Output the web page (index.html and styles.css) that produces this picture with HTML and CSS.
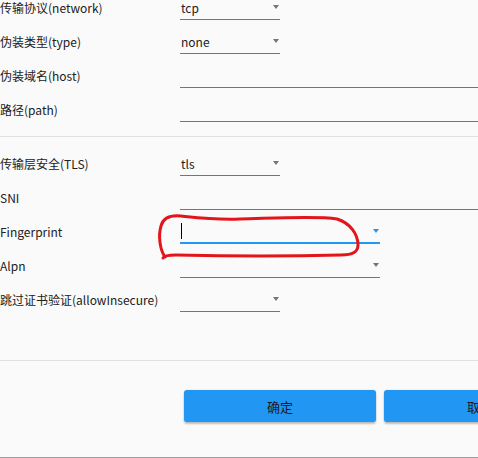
FILE: index.html
```html
<!DOCTYPE html>
<html lang="zh">
<head>
<meta charset="utf-8">
<link rel="stylesheet" href="styles.css">
</head>
<body>
<div class="page">
  <div class="section first">
    <div class="row"><div class="label">传输协议(network)</div><div class="field select short"><span class="value">tcp</span><span class="arrow"></span></div></div>
    <div class="row"><div class="label">伪装类型(type)</div><div class="field select short"><span class="value">none</span><span class="arrow"></span></div></div>
    <div class="row"><div class="label">伪装域名(host)</div><div class="field full"></div></div>
    <div class="row"><div class="label">路径(path)</div><div class="field full"></div></div>
  </div>
  <div class="section second">
    <div class="row"><div class="label">传输层安全(TLS)</div><div class="field select short"><span class="value">tls</span><span class="arrow"></span></div></div>
    <div class="row"><div class="label">SNI</div><div class="field full"></div></div>
    <div class="row"><div class="label">Fingerprint</div><div class="field select medium focused"><span class="cursor"></span><span class="arrow"></span></div></div>
    <div class="row"><div class="label">Alpn</div><div class="field select medium"><span class="value"></span><span class="arrow"></span></div></div>
    <div class="row"><div class="label">跳过证书验证(allowInsecure)</div><div class="field select short"><span class="value"></span><span class="arrow"></span></div></div>
  </div>
  <div class="actions">
    <button class="btn">确定</button>
    <button class="btn">取消</button>
  </div>
  <svg class="mark" width="478" height="458" viewBox="0 0 478 458" xmlns="http://www.w3.org/2000/svg">
    <path d="M165 257 C160 250, 158 236, 161 226 C163 218, 170 215, 181 216 C200 218, 216 220, 240 219 C280 218, 318 216, 337 219 C350 223, 358 234, 358 245 C358 252, 353 255, 341 255 C300 256, 222 256, 176 255 C169 255, 164 256, 163 258" fill="none" stroke="#e3151a" stroke-width="3" stroke-linecap="round" stroke-linejoin="round"/>
  </svg>
</div>
</body>
</html>
```
FILE: styles.css
```css
html, body {
  margin: 0;
  padding: 0;
  background: #fafafa;
  overflow: hidden;
}
.page {
  position: relative;
  width: 478px;
  height: 458px;
  overflow: hidden;
  background: #fafafa;
  font-family: "Noto Sans CJK SC", "Noto Sans", sans-serif;
  font-size: 12px;
  color: #212121;
  border-bottom: 1px solid #9e9e9e;
  box-sizing: border-box;
}
.section {
  border-bottom: 1px solid #e0e0e0;
}
.section.second {
  padding-top: 19px;
  padding-bottom: 34px;
}
.row {
  display: flex;
  height: 34px;
}
.label {
  width: 180px;
  flex: none;
  line-height: 16px;
  white-space: nowrap;
}
.field {
  position: relative;
  box-sizing: border-box;
  height: 20px;
  border-bottom: 1px solid #757575;
  line-height: 15px;
}
.field.short { width: 100px; }
.field.medium { width: 200px; }
.field.full { flex: 1; min-width: 320px; }
.field.focused { border-bottom: 2px solid #2196f3; }
.value { padding-left: 1px; }
.arrow {
  position: absolute;
  right: 1px;
  top: 5px;
  width: 0;
  height: 0;
  border-left: 3.5px solid transparent;
  border-right: 3.5px solid transparent;
  border-top: 4px solid #757575;
}
.focused .arrow { border-top-color: #2196f3; }
.cursor {
  position: absolute;
  left: 1px;
  top: -1px;
  width: 1px;
  height: 16px;
  background: #000;
}
.actions {
  display: flex;
  gap: 8px;
  padding: 29px 0 0 184px;
}
.btn {
  flex: none;
  width: 192px;
  height: 32px;
  border: none;
  border-radius: 3px;
  background: #2196f3;
  color: #1a1a1a;
  font-family: "Noto Sans CJK SC", sans-serif;
  font-size: 13px;
  box-shadow: 0 2px 2px rgba(0,0,0,0.24), 0 0 2px rgba(0,0,0,0.12);
  padding: 0;
}
.mark {
  position: absolute;
  left: 0;
  top: 0;
  pointer-events: none;
}
```
